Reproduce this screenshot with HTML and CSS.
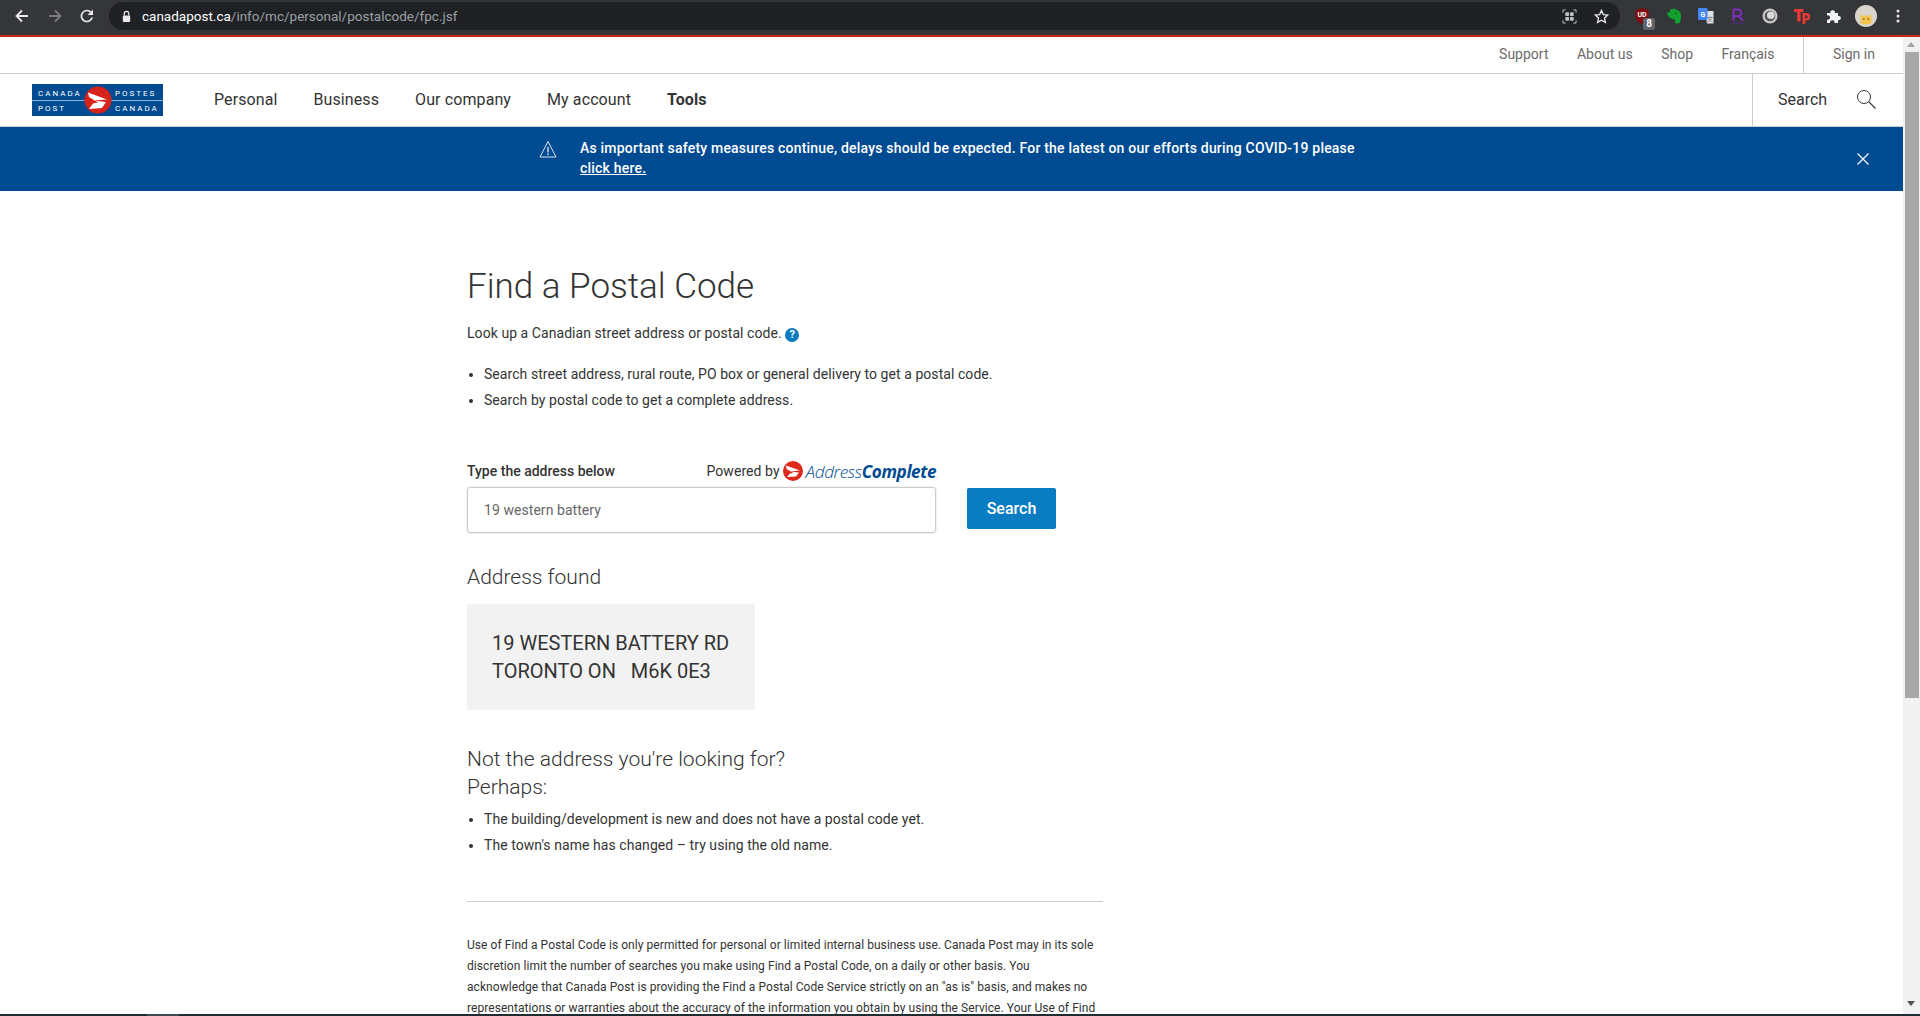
FILE: index.html
```html
<!DOCTYPE html>
<html lang="en">
<head>
    <meta charset="UTF-8">
    <meta name="viewport" content="width=device-width, initial-scale=1.0">
    <title>Find a Postal Code</title>
    <link rel="stylesheet" href="styles.css">
</head>
<body>
    <div class="browser-bar">
        <div class="browser-nav">
            <svg class="nav-icon" viewBox="0 0 16 16"><path d="M14 8H3M8 2.500 2.500 8 8 13.500" fill="none" stroke="#e8eaed" stroke-width="1.800"/></svg>
            <svg class="nav-icon" viewBox="0 0 16 16"><path d="M2 8h11M8 2.500 13.500 8 8 13.500" fill="none" stroke="#7c7e82" stroke-width="1.800"/></svg>
            <svg class="nav-icon" viewBox="0 0 16 16"><path d="M13.200 9.500A5.500 5.500 0 1 1 12 4.300" fill="none" stroke="#e8eaed" stroke-width="1.700"/><path d="M14 1.500V7H8.500z" fill="#e8eaed"/></svg>
        </div>
        <div class="omnibox">
            <svg class="lock" viewBox="0 0 12 14"><path d="M3.500 6V4a2.500 2.500 0 0 1 5 0v2" fill="none" stroke="#e8eaed" stroke-width="1.300"/><rect x="2" y="6" width="8" height="7" rx="1" fill="#e8eaed"/></svg>
            <span class="url"><span class="url-host">canadapost.ca</span>/info/mc/personal/postalcode/fpc.jsf</span>
            <svg class="omni-icon" viewBox="0 0 16 16"><path d="M1 4V1h3M12 1h3v3M15 12v3h-3M4 15H1v-3" fill="none" stroke="#bdc1c6" stroke-width="1"/><rect x="3.500" y="3.500" width="4" height="4" rx=".8" fill="#bdc1c6"/><rect x="8.500" y="3.500" width="4" height="4" rx=".8" fill="#bdc1c6"/><rect x="3.500" y="8.500" width="4" height="4" rx=".8" fill="#bdc1c6"/><rect x="8.500" y="8.500" width="4" height="4" rx=".8" fill="#bdc1c6"/></svg>
            <svg class="omni-icon omni-star" viewBox="0 0 16 16"><path d="M8 1.500l2 4.400 4.700.5-3.500 3.200 1 4.700L8 11.900l-4.200 2.400 1-4.700L1.300 6.400 6 5.900z" fill="none" stroke="#e8eaed" stroke-width="1.400"/></svg>
        </div>
        <div class="extensions">
            <div class="ext">
                <svg class="ext-icon" viewBox="0 0 16 16"><path d="M8 0l6.500 2v6.500C14.500 12 11 15 8 16 5 15 1.500 12 1.500 8.500V2z" fill="#800b10"/><text x="8" y="9" class="ub-text">UD</text></svg>
                <span class="ext-badge">8</span>
            </div>
            <div class="ext">
                <svg class="ext-icon" viewBox="0 0 16 16"><path d="M1 5l3-1V1.500C5 1 7 .5 9 .8c1 .2 1.500.8 2 1.400 2 .2 3.500 1.500 3.800 4.300.3 3 .2 6-1 8-.8 1.300-3.600 1.500-4.600.4-.8-.9-.7-2.400.5-2.900-1.500-.6-3.200-1-4.700-1.800C3 9.500 1.500 8 1 5z" fill="#12a12e"/><circle cx="10" cy="5.500" r="1" fill="#0b6a1d"/></svg>
            </div>
            <div class="ext">
                <svg class="ext-icon" viewBox="0 0 16 16"><path d="M7 3h8.500v12.500H9z" fill="#dfe1e5"/><rect x="0" y="0" width="9.500" height="12" rx="1" fill="#4285f4"/><text x="4.800" y="8.500" class="gt-text">G</text><text x="12" y="12.500" class="gt-cjk">文</text></svg>
            </div>
            <div class="ext">
                <svg class="ext-icon" viewBox="0 0 16 16"><path d="M3.500 .5v12M3.500 1.500h5a3.300 3.300 0 0 1 0 6.500h-5M8.500 8l4.500 4.500" fill="none" stroke="#7b2fb5" stroke-width="2.200"/><path d="M1 15h13" stroke="#4b2a80" stroke-width="1.200"/></svg>
            </div>
            <div class="ext">
                <svg class="ext-icon" viewBox="0 0 16 16"><circle cx="8" cy="8" r="7.500" fill="#c9c9c9"/><circle cx="8" cy="8" r="5.300" fill="#55565a"/><circle cx="8.800" cy="7.200" r="3.800" fill="#d9d9d9"/></svg>
            </div>
            <div class="ext">
                <svg class="ext-icon" viewBox="0 0 16 16"><path d="M0 1h9.500v3H6.500v9.500H3.200V4H0zM8.500 5h4a3.300 3.300 0 0 1 0 7.500h-1.200V16H8.500zM11.300 7.300v3h.9a1.500 1.500 0 0 0 0-3z" fill="#ea3a36"/></svg>
            </div>
            <div class="ext">
                <svg class="ext-icon" viewBox="0 0 16 16"><path d="M1 5h3.500a2.200 2.200 0 1 1 4.300 0h3.200v3a2.200 2.200 0 1 1 0 4.200V15H8.500a2.200 2.200 0 1 0-4.300 0H1v-3.500a2.200 2.200 0 1 0 0-4z" fill="#f1f3f4"/></svg>
            </div>
            <div class="ext">
                <svg class="avatar" viewBox="0 0 22 22"><circle cx="11" cy="11" r="11" fill="#d8d5cc"/><path d="M5.500 18V9L8 11c2-.7 4-.7 6 0l2.500-2v9a11 11 0 0 1-11 0z" fill="#f3c44f"/><circle cx="8.800" cy="14" r=".8" fill="#6b4b1f"/><circle cx="13.200" cy="14" r=".8" fill="#6b4b1f"/></svg>
            </div>
            <div class="ext">
                <svg class="dots" viewBox="0 0 4 16"><circle cx="2" cy="3" r="1.500" fill="#e8eaed"/><circle cx="2" cy="8" r="1.500" fill="#e8eaed"/><circle cx="2" cy="13" r="1.500" fill="#e8eaed"/></svg>
            </div>
        </div>
    </div>

    <div class="viewport">
        <div class="page">
            <div class="top-nav">
                <a class="top-link">Support</a>
                <a class="top-link">About us</a>
                <a class="top-link">Shop</a>
                <a class="top-link">Français</a>
                <a class="sign-in"><span>Sign in</span></a>
            </div>

            <div class="main-nav">
                <svg class="logo" viewBox="0 0 131 32">
                    <rect width="131" height="32" fill="#004b91"/>
                    <path d="M0 16.500h131" stroke="#8fb0d3" stroke-width="1"/>
                    <text x="6" y="11.500" class="logo-text">CANADA</text>
                    <text x="6" y="26.500" class="logo-text">POST</text>
                    <text x="83" y="11.500" class="logo-text">POSTES</text>
                    <text x="83" y="26.500" class="logo-text">CANADA</text>
                    <circle cx="66" cy="16" r="13.500" fill="#d8231a"/>
                    <path d="M56 8.500 75 15.500 61 16.500 74 18 70 24 57 25 61 19.500 66 18.500 57 13z" fill="#fff"/>
                </svg>
                <a class="nav-link">Personal</a>
                <a class="nav-link">Business</a>
                <a class="nav-link">Our company</a>
                <a class="nav-link">My account</a>
                <a class="nav-link nav-active">Tools</a>
                <div class="nav-search">
                    <span>Search</span>
                    <svg class="search-icon" viewBox="0 0 20 20"><circle cx="8" cy="8" r="6.500" fill="none" stroke="#333" stroke-width="1"/><path d="M12.700 12.700 19.500 19.500" stroke="#333" stroke-width="1.200"/></svg>
                </div>
            </div>

            <div class="alert">
                <svg class="alert-icon" viewBox="0 0 18 18"><path d="M9 1.500 17 17H1z" fill="none" stroke="#dfe8f2" stroke-width="1"/><path d="M9 7v5.500M9 13.500v1.500" stroke="#fff" stroke-width="1.200"/></svg>
                <p class="alert-text">As important safety measures continue, delays should be expected. For the latest on our efforts during COVID-19 please <a class="alert-link">click here.</a></p>
                <svg class="alert-close" viewBox="0 0 12 12"><path d="M.5.500l11 11M11.500.500l-11 11" stroke="#fff" stroke-width="1.200"/></svg>
            </div>

            <div class="content">
                <h1>Find a Postal Code</h1>
                <p class="lede">Look up a Canadian street address or postal code. <span class="help">?</span></p>
                <ul class="bullets intro-list">
                    <li>Search street address, rural route, PO box or general delivery to get a postal code.</li>
                    <li>Search by postal code to get a complete address.</li>
                </ul>

                <div class="search-row">
                    <div class="search-field">
                        <div class="field-labels">
                            <label class="field-label">Type the address below</label>
                            <div class="powered">
                                <span>Powered by</span>
                                <svg class="ac-mark" viewBox="0 0 20 20"><circle cx="10" cy="10" r="10" fill="#dc2a1c"/><path d="M3 4.500 17 9.500 7 10.500 16 11.500 13 15.500 4 16 7 12.500 10.500 12 3.500 8z" fill="#fff"/></svg>
                                <span class="ac-name">Address<b>Complete</b><small>.</small></span>
                            </div>
                        </div>
                        <div class="address-input">19 western battery</div>
                    </div>
                    <button class="search-btn">Search</button>
                </div>

                <h2 class="found-title">Address found</h2>
                <div class="address-box">19 WESTERN BATTERY RD<br>TORONTO ON&nbsp;&nbsp; M6K 0E3</div>

                <h2 class="perhaps">Not the address you're looking for?<br>Perhaps:</h2>
                <ul class="bullets">
                    <li>The building/development is new and does not have a postal code yet.</li>
                    <li>The town's name has changed – try using the old name.</li>
                </ul>

                <hr class="rule">
                <p class="terms">Use of Find a Postal Code is only permitted for personal or limited internal business use. Canada Post may in its sole discretion limit the number of searches you make using Find a Postal Code, on a daily or other basis. You acknowledge that Canada Post is providing the Find a Postal Code Service strictly on an "as is" basis, and makes no representations or warranties about the accuracy of the information you obtain by using the Service. Your Use of Find</p>
            </div>
        </div>
        <div class="scrollbar">
            <div class="scroll-up"></div>
            <div class="scroll-thumb"></div>
            <div class="scroll-down"></div>
        </div>
    </div>
    <div class="taskbar"><span class="task-item"></span></div>
</body>
</html>
```

FILE: styles.css
```css
* {
    box-sizing: border-box;
}
html, body {
    height: 100%;
}
body {
    margin: 0;
    overflow: hidden;
    display: flex;
    flex-direction: column;
    font-family: Roboto, "Liberation Sans", sans-serif;
    font-size: 14px;
    color: #333;
    background-color: #fff;
}

/* browser toolbar */
.browser-bar {
    flex: none;
    height: 37px;
    display: flex;
    background-color: #35363a;
    border-bottom: 2px solid #c8281c;
    padding-top: 2px;
}
.browser-nav {
    width: 109px;
    display: flex;
    gap: 16.500px;
    padding: 6px 0 0 14px;
}
.nav-icon {
    width: 16px;
    height: 16px;
}
.omnibox {
    width: 1511px;
    height: 28px;
    display: flex;
    align-items: center;
    background-color: #202124;
    border-radius: 14px;
    padding-left: 12px;
}
.lock {
    width: 11px;
    height: 13px;
}
.url {
    flex: 1;
    margin-left: 10px;
    color: #9aa0a6;
    font-size: 13.500px;
}
.url-host {
    color: #fff;
}
.omni-icon {
    width: 15px;
    height: 15px;
    margin-right: 17px;
}
.omni-star {
    margin-right: 11px;
}
.extensions {
    display: flex;
    padding-left: 6px;
}
.ext {
    position: relative;
    width: 32px;
    height: 28px;
    display: flex;
    align-items: center;
    justify-content: center;
}
.ext-icon {
    width: 16px;
    height: 16px;
}
.ext-badge {
    position: absolute;
    left: 17px;
    top: 16px;
    width: 12px;
    height: 12px;
    border-radius: 2px;
    background-color: #5f6368;
    color: #fff;
    font-size: 10px;
    font-weight: 700;
    line-height: 12px;
    text-align: center;
}
.ub-text {
    font-family: Roboto, sans-serif;
    font-size: 7px;
    font-weight: 700;
    fill: #fff;
    text-anchor: middle;
}
.gt-text {
    font-family: Roboto, sans-serif;
    font-size: 7px;
    font-weight: 700;
    fill: #fff;
    text-anchor: middle;
}
.gt-cjk {
    font-family: "Noto Sans CJK SC", sans-serif;
    font-size: 6px;
    fill: #5f6368;
    text-anchor: middle;
}
.avatar {
    width: 22px;
    height: 22px;
}
.dots {
    width: 4px;
    height: 16px;
}

/* page frame */
.viewport {
    flex: 1;
    min-height: 0;
    display: flex;
}
.page {
    flex: 1;
    min-width: 0;
    overflow: hidden;
}
.scrollbar {
    flex: none;
    width: 17px;
    display: flex;
    flex-direction: column;
    padding-bottom: 5px;
    background-color: #f1f1f1;
}
.scroll-up {
    height: 15px;
    position: relative;
}
.scroll-up::before {
    content: "";
    position: absolute;
    left: 4px;
    top: 5px;
    border-left: 4.500px solid transparent;
    border-right: 4.500px solid transparent;
    border-bottom: 5px solid #a3a3a3;
}
.scroll-thumb {
    height: 646px;
    margin: 0 1px 0 2px;
    background-color: #a8a8a8;
}
.scroll-down {
    flex: 1;
    position: relative;
}
.scroll-down::before {
    content: "";
    position: absolute;
    left: 4px;
    bottom: 3px;
    border-left: 4.500px solid transparent;
    border-right: 4.500px solid transparent;
    border-top: 5px solid #505050;
}
.taskbar {
    flex: none;
    height: 2px;
    background-color: #1f2d33;
}
.task-item {
    display: block;
    width: 32px;
    height: 2px;
    margin-left: 147px;
    background-color: #3f4a52;
}

/* top links */
.top-nav {
    height: 37px;
    display: flex;
    justify-content: flex-end;
    align-items: center;
    border-bottom: 1px solid #ccc;
}
.top-link {
    color: #6b6b6b;
    margin: 0 28.500px 2px 0;
}
.sign-in {
    height: 100%;
    width: 100px;
    display: flex;
    align-items: center;
    padding: 0 0 2px 29px;
    color: #6b6b6b;
    border-left: 1px solid #ccc;
}

/* main nav */
.main-nav {
    height: 53px;
    display: flex;
    align-items: center;
    padding-left: 32px;
    border-bottom: 1px solid #ccc;
}
.logo {
    width: 131px;
    height: 32px;
    margin-right: 51px;
}
.logo-text {
    font-family: Roboto, sans-serif;
    font-size: 8px;
    font-weight: 400;
    letter-spacing: 2px;
    fill: #fff;
}
.nav-link {
    font-size: 16px;
    letter-spacing: .1px;
    color: #333;
    margin: 0 36px 2px 0;
}
.nav-active {
    font-weight: 700;
}
.nav-search {
    margin-left: auto;
    height: 100%;
    width: 151px;
    display: flex;
    align-items: center;
    padding: 0 0 2px 25px;
    border-left: 1px solid #ccc;
    font-size: 16px;
}
.search-icon {
    width: 20px;
    height: 20px;
    margin-left: 29px;
}

/* alert */
.alert {
    height: 64px;
    display: flex;
    padding: 11px 0 0 539px;
    background-color: #004b91;
    color: #fff;
}
.alert-icon {
    width: 18px;
    height: 18px;
    margin-top: 2px;
}
.alert-text {
    width: 790px;
    margin: 0 0 0 23px;
    font-weight: 500;
    letter-spacing: .2px;
    line-height: 20px;
}
.alert-link {
    display: inline-block;
    text-decoration: underline;
}
.alert-close {
    width: 12px;
    height: 12px;
    margin: 15px 0 0 487px;
}

/* content */
.content {
    width: 1103px;
    padding: 73px 0 0 467px;
    letter-spacing: .06px;
}
h1 {
    margin: 0;
    font-size: 35px;
    font-weight: 300;
    letter-spacing: 0;
    line-height: 46px;
}
.lede {
    margin: 13px 0 0;
    line-height: 20px;
}
.help {
    display: inline-block;
    width: 14px;
    height: 14px;
    border-radius: 50%;
    background-color: #0a7cc1;
    color: #fff;
    font-size: 11px;
    font-weight: 700;
    line-height: 14px;
    text-align: center;
    vertical-align: 0;
}
.bullets {
    margin: 0;
    padding-left: 17px;
}
.bullets li {
    line-height: 20px;
    margin-bottom: 6px;
}
.intro-list {
    margin-top: 21px;
}
.search-row {
    margin-top: 49px;
    display: flex;
}
.search-field {
    width: 469px;
}
.field-labels {
    height: 28px;
    padding-bottom: 4px;
    display: flex;
    justify-content: space-between;
    align-items: center;
}
.field-label {
    font-weight: 500;
    letter-spacing: 0;
}
.powered {
    display: flex;
    align-items: center;
    gap: 3px;
    margin-right: -2px;
}
.ac-mark {
    width: 20px;
    height: 20px;
}
.ac-name {
    font-family: "Open Sans", sans-serif;
    font-size: 17.200px;
    font-style: italic;
    font-weight: 300;
    letter-spacing: -.4px;
    color: #004b91;
}
.ac-name b {
    font-weight: 700;
}
.ac-name small {
    font-size: 10px;
    color: #7fa5c8;
}
.address-input {
    height: 46px;
    display: flex;
    align-items: center;
    padding-left: 16px;
    border: 1px solid #ccc;
    border-radius: 3px;
    box-shadow: 0 0 2px rgba(0, 0, 0, 0.2);
    color: #666;
}
.search-btn {
    width: 89px;
    height: 41px;
    margin: 29px 0 0 31px;
    padding: 0;
    border: none;
    border-radius: 2px;
    background-color: #0a7cc1;
    color: #fff;
    font-family: inherit;
    font-size: 16px;
    font-weight: 500;
}
.found-title {
    margin: 29px 0 0;
    font-size: 21px;
    font-weight: 300;
    letter-spacing: 0;
    line-height: 30px;
}
.address-box {
    width: 288px;
    height: 106px;
    margin-top: 12px;
    padding: 25px 0 0 25px;
    background-color: #f2f2f2;
    font-size: 20px;
    letter-spacing: 0;
    line-height: 28px;
}
.perhaps {
    margin: 35px 0 0;
    font-size: 21px;
    font-weight: 300;
    letter-spacing: 0;
    line-height: 28px;
}
.perhaps + .bullets {
    margin-top: 8px;
}
.rule {
    margin: 46px 0 0;
    border: none;
    border-top: 1px solid #ccc;
}
.terms {
    margin: 33px 0 0;
    font-size: 12px;
    line-height: 21px;
}
```
